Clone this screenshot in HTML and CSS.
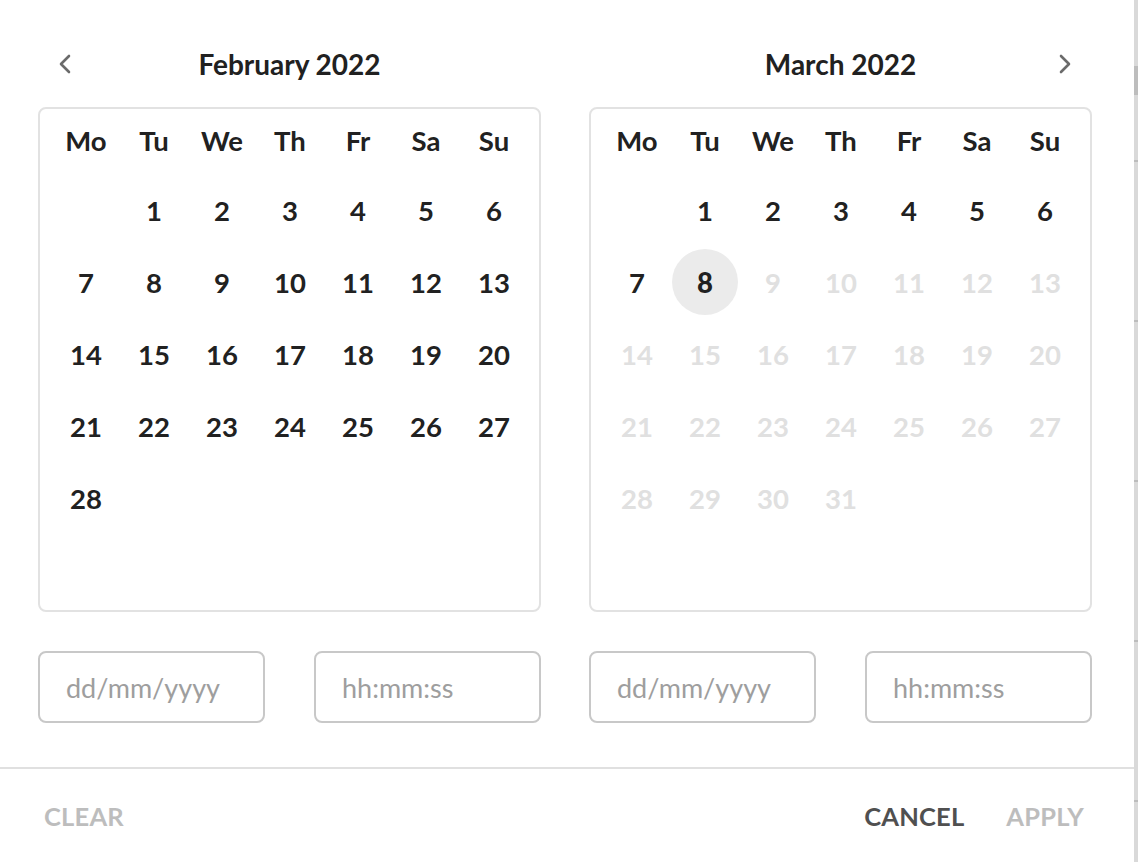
FILE: index.html
```html
<!DOCTYPE html>
<html lang="en">
<head>
    <meta charset="UTF-8">
    <meta name="viewport" content="width=device-width, initial-scale=1.0">
    <title>Date range picker</title>
    <link rel="stylesheet" href="styles.css">
</head>
<body>
    <div class="page">
        <div class="dialog">
            <div class="months">
                <div class="month">
                    <div class="month-head">
                        <button class="nav-btn" aria-label="Previous month">
                            <svg width="14" height="20" viewBox="0 0 14 20"><path d="M11 2 L3 10 L11 18" fill="none" stroke="#6b6b6b" stroke-width="2.6" stroke-linecap="round" stroke-linejoin="round"/></svg>
                        </button>
                        <div class="month-title">February 2022</div>
                        <span class="nav-spacer"></span>
                    </div>
                    <div class="cal-box">
                        <div class="weekdays">
                            <span>Mo</span><span>Tu</span><span>We</span><span>Th</span><span>Fr</span><span>Sa</span><span>Su</span>
                        </div>
                        <div class="days">
                            <span></span><span>1</span><span>2</span><span>3</span><span>4</span><span>5</span><span>6</span>
                            <span>7</span><span>8</span><span>9</span><span>10</span><span>11</span><span>12</span><span>13</span>
                            <span>14</span><span>15</span><span>16</span><span>17</span><span>18</span><span>19</span><span>20</span>
                            <span>21</span><span>22</span><span>23</span><span>24</span><span>25</span><span>26</span><span>27</span>
                            <span>28</span>
                        </div>
                    </div>
                    <div class="inputs">
                        <div class="field">dd/mm/yyyy</div>
                        <div class="field">hh:mm:ss</div>
                    </div>
                </div>

                <div class="month">
                    <div class="month-head">
                        <span class="nav-spacer"></span>
                        <div class="month-title">March 2022</div>
                        <button class="nav-btn" aria-label="Next month">
                            <svg width="14" height="20" viewBox="0 0 14 20"><path d="M3 2 L11 10 L3 18" fill="none" stroke="#6b6b6b" stroke-width="2.6" stroke-linecap="round" stroke-linejoin="round"/></svg>
                        </button>
                    </div>
                    <div class="cal-box">
                        <div class="weekdays">
                            <span>Mo</span><span>Tu</span><span>We</span><span>Th</span><span>Fr</span><span>Sa</span><span>Su</span>
                        </div>
                        <div class="days">
                            <span></span><span>1</span><span>2</span><span>3</span><span>4</span><span>5</span><span>6</span>
                            <span>7</span><span class="today"><b>8</b></span><span class="off">9</span><span class="off">10</span><span class="off">11</span><span class="off">12</span><span class="off">13</span>
                            <span class="off">14</span><span class="off">15</span><span class="off">16</span><span class="off">17</span><span class="off">18</span><span class="off">19</span><span class="off">20</span>
                            <span class="off">21</span><span class="off">22</span><span class="off">23</span><span class="off">24</span><span class="off">25</span><span class="off">26</span><span class="off">27</span>
                            <span class="off">28</span><span class="off">29</span><span class="off">30</span><span class="off">31</span>
                        </div>
                    </div>
                    <div class="inputs">
                        <div class="field">dd/mm/yyyy</div>
                        <div class="field">hh:mm:ss</div>
                    </div>
                </div>
            </div>

            <div class="footer">
                <button class="text-btn muted">Clear</button>
                <div class="footer-right">
                    <button class="text-btn">Cancel</button>
                    <button class="text-btn muted">Apply</button>
                </div>
            </div>
        </div>
        <div class="backdrop-edge"></div>
    </div>
</body>
</html>
```

FILE: styles.css
```css
body {
    margin: 0;
    font-family: Lato, "Open Sans", sans-serif;
    color: #212121;
    background: #fff;
}

.page {
    display: flex;
    height: 862px;
    overflow: hidden;
}

.dialog {
    width: 1134px;
    flex-shrink: 0;
    background: #fff;
    border-radius: 0 4px 4px 0;
    display: flex;
    flex-direction: column;
}

.backdrop-edge {
    flex: 1;
    background:
        linear-gradient(#bdbdbd, #bdbdbd) 0 66px / 100% 29px no-repeat,
        repeating-linear-gradient(#d9d9d9 0, #d9d9d9 158px, #bcbcbc 158px, #bcbcbc 160px) 0 2px,
        #d9d9d9;
    background-color: #d9d9d9;
}

.months {
    display: flex;
    gap: 48px;
    padding: 40px 0 0 38px;
}

.month {
    width: 503px;
}

.month-head {
    display: grid;
    grid-template-columns: 54px 1fr 54px;
    align-items: center;
    height: 48px;
    margin-bottom: 19px;
}

.nav-btn {
    background: none;
    border: none;
    padding: 0;
    cursor: pointer;
    display: flex;
    justify-content: center;
    align-items: center;
    height: 48px;
}

.month-title {
    text-align: center;
    font-size: 28px;
    font-weight: 700;
}

.cal-box {
    height: 501px;
    border: 2px solid #e2e2e2;
    border-radius: 8px;
    padding: 0 12px;
}

.weekdays,
.days {
    display: grid;
    grid-template-columns: repeat(7, 68px);
    font-size: 27.5px;
    font-weight: 700;
    text-align: center;
}

.weekdays span {
    height: 64px;
    line-height: 64px;
}

.days {
    padding-top: 1px;
    grid-auto-rows: 72px;
}

.days span {
    display: flex;
    justify-content: center;
    align-items: center;
}

.days .off {
    color: #e0e0e0;
}

.days .today b {
    width: 66px;
    height: 66px;
    border-radius: 50%;
    background: #ebebeb;
    display: flex;
    justify-content: center;
    align-items: center;
}

.inputs {
    display: flex;
    gap: 49px;
    margin-top: 39px;
}

.field {
    width: 227px;
    height: 72px;
    box-sizing: border-box;
    border: 2px solid #c8c8c8;
    border-radius: 8px;
    padding-left: 26px;
    display: flex;
    align-items: center;
    font-size: 27px;
    color: #9e9e9e;
}

.footer {
    margin-top: 44px;
    border-top: 2px solid #e0e0e0;
    height: 93px;
    display: flex;
    justify-content: space-between;
    align-items: center;
    padding: 0 50px 0 44px;
}

.footer-right {
    display: flex;
    gap: 42px;
}

.text-btn {
    background: none;
    border: none;
    padding: 0;
    font-family: inherit;
    font-size: 25.5px;
    font-weight: 700;
    text-transform: uppercase;
    letter-spacing: 0.2px;
    color: #505050;
    cursor: pointer;
}

.text-btn.muted {
    color: #bdbdbd;
}
```
